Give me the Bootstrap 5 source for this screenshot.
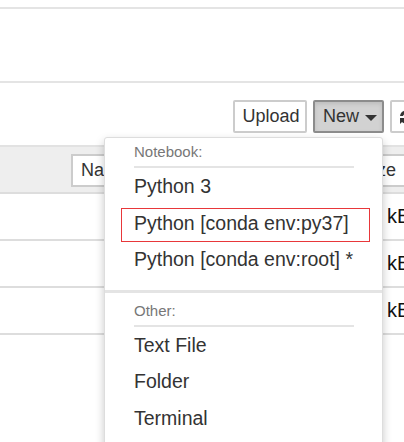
<!doctype html>
<html><head><meta charset="utf-8">
<link href="https://cdn.jsdelivr.net/npm/bootstrap@5.3.0/dist/css/bootstrap.min.css" rel="stylesheet">
<style>
html,body{margin:0;height:442px;overflow:hidden;background:#fff;font-family:"Liberation Sans",Arial,sans-serif;color:#333;font-size:18px}
.page{position:relative;height:442px;overflow:hidden}
.topband{height:76px;margin-top:7px;border-top:2px solid #e4e4e4;border-bottom:2px solid #e4e4e4}
.toolrow{height:62px;padding-top:17px;gap:6px;margin-right:-22px}
.tbtn{height:33px;border:2px solid #ccc;border-radius:2px;background:#fff;color:#333;font-size:18px;line-height:29px;padding:0 8px;white-space:nowrap}
.tbtn.on{background:#d2d2d2;border-color:#8c8c8c;box-shadow:inset 0 2px 4px rgba(0,0,0,.1)}
.upl{width:74.5px}.nw{width:71px}.rf{width:36px;padding:0 0 0 5px}
.caret{display:inline-block;width:0;height:0;border-top:6px solid #333;border-left:6px solid transparent;border-right:6px solid transparent;vertical-align:middle;margin-left:1px;margin-top:1px}
.listhead{height:49px;background:#eee;border-top:2px solid #e2e2e2;border-bottom:2px solid #ddd;padding-top:7px}
.namebtn{margin-left:71px;width:60px;height:33px;border:2px solid #ccc;background:#fff;line-height:29px;padding-left:8px;overflow:hidden}
.sizebtn{position:absolute;left:340px;top:154px;width:80px;height:33px;border:2px solid #ccc;background:#fff;line-height:29px;padding-left:19px}
.frow{height:47px;border-bottom:2px solid #ddd;padding-left:387px;line-height:45px;color:#111;font-size:20px;white-space:nowrap}
.menu{position:absolute;left:104px;top:137px;width:279px;height:320px;background:#fff;border:1px solid #ddd;border-radius:3px;box-shadow:0 4px 10px rgba(0,0,0,.22);color:#333}
.mhead{font-size:15px;color:#777;padding-left:29px;line-height:17px;height:17px}
.h1st{margin-top:5px}.h2nd{margin-top:8.5px}
.msep{height:2px;background:#e4e4e4;margin:6px 28px 6px 29px}
.h2nd + .msep{margin:6.5px 28px 5.5px 29px}
.mitem{font-size:19.5px;line-height:24px;padding-left:29px;height:36.5px;white-space:nowrap;color:#333}
.mfull{height:3px;background:#e4e4e4;margin-top:6.5px}
.redbox{position:absolute;left:121px;top:208px;width:249px;height:34px;border:1px solid #e8373a}
</style></head><body>
<div class="page">
<div class="topband"></div>
<div class="toolrow d-flex justify-content-end">
<div class="tbtn upl">Upload</div>
<div class="tbtn on nw">New <span class="caret"></span></div>
<div class="tbtn rf"><svg width="18" height="20" viewBox="0 0 18 20"><path d="M3 9a6 6 0 0 1 10-4l2-2v6H9l2-2a3.5 3.5 0 0 0-5 2zM15 11a6 6 0 0 1-10 4l-2 2v-6h6l-2 2a3.5 3.5 0 0 0 5-2z" fill="#333"/></svg></div>
</div>
<div class="listhead"><div class="namebtn">Name</div></div>
<div class="frow">kB</div>
<div class="frow">kB</div>
<div class="frow">kB</div>
<div class="sizebtn">Size</div>
<div class="menu">
<div class="mhead h1st">Notebook:</div>
<div class="msep"></div>
<div class="mitem">Python 3</div>
<div class="mitem">Python [conda env:py37]</div>
<div class="mitem">Python [conda env:root] *</div>
<div class="mfull"></div>
<div class="mhead h2nd">Other:</div>
<div class="msep"></div>
<div class="mitem">Text File</div>
<div class="mitem">Folder</div>
<div class="mitem">Terminal</div>
</div>
<div class="redbox"></div>
</div>
<script src="https://cdn.jsdelivr.net/npm/bootstrap@5.3.0/dist/js/bootstrap.bundle.min.js"></script>
</body></html>
